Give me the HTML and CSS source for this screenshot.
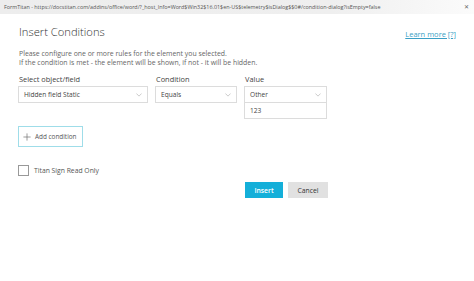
FILE: index.html
```html
<!DOCTYPE html>
<html lang="en">
<head>
  <meta charset="UTF-8">
  <title>FormTitan - Insert Conditions</title>
  <link rel="stylesheet" href="styles.css">
</head>
<body>
  <div class="titlebar">
    <span class="titlebar-text">FormTitan - https://docstitan.com/addins/office/word/?_host_Info=Word$Win32$16.01$en-US$telemetry$isDialog$$0#/condition-dialog?isEmpty=false</span>
    <span class="titlebar-close">&#x2715;</span>
  </div>

  <div class="dialog">
    <div class="dialog-header">
      <h1>Insert Conditions</h1>
      <a href="#" class="learn-more">Learn more [?]</a>
    </div>
    <p class="intro">
      Please configure one or more rules for the element you selected.<br>
      If the condition is met - the element will be shown, if not - it will be hidden.
    </p>

    <div class="rule">
      <div class="field">
        <label>Select object/field</label>
        <div class="select">
          <span>Hidden field Static</span>
          <svg class="chevron" viewBox="0 0 8 5"><path d="M0.5 0.5 L4 4 L7.5 0.5" fill="none" stroke="#aaa" stroke-width="0.8"/></svg>
        </div>
      </div>
      <div class="field">
        <label>Condition</label>
        <div class="select">
          <span>Equals</span>
          <svg class="chevron" viewBox="0 0 8 5"><path d="M0.5 0.5 L4 4 L7.5 0.5" fill="none" stroke="#aaa" stroke-width="0.8"/></svg>
        </div>
      </div>
      <div class="field">
        <label>Value</label>
        <div class="select">
          <span>Other</span>
          <svg class="chevron" viewBox="0 0 8 5"><path d="M0.5 0.5 L4 4 L7.5 0.5" fill="none" stroke="#aaa" stroke-width="0.8"/></svg>
        </div>
        <div class="text-input">123</div>
      </div>
    </div>

    <button class="add-btn">
      <svg viewBox="0 0 10 10"><path d="M5 0.5 V9.5 M0.5 5 H9.5" stroke="#777" stroke-width="0.9"/></svg>
      Add condition
    </button>

    <label class="check">
      <span class="box"></span>
      Titan Sign Read Only
    </label>

    <div class="actions">
      <button class="btn btn-primary">Insert</button>
      <button class="btn btn-default">Cancel</button>
    </div>
  </div>
</body>
</html>
```

FILE: styles.css
```css
body {
  margin: 0;
  font-family: 'Open Sans', 'Noto Sans', Arial, sans-serif;
  background: #fff;
  color: #444;
}
.titlebar {
  height: 14px;
  display: flex;
  align-items: center;
  justify-content: space-between;
  padding: 0 5px 0 4px;
  background: linear-gradient(90deg, #ededed 0%, #efefef 70%, #fbfbfb 100%);
}
.titlebar-text {
  font-size: 5.4px;
  color: #555;
  white-space: nowrap;
}
.titlebar-close {
  font-size: 6px;
  color: #666;
}
.dialog {
  padding: 0 18px 0 19px;
}
.dialog-header {
  display: flex;
  justify-content: space-between;
  align-items: center;
  margin-top: 10px;
}
.dialog-header h1 {
  margin: 0;
  font-size: 11.2px;
  font-weight: 300;
  color: #333;
  line-height: 16px;
}
.learn-more {
  font-size: 7.5px;
  color: #3a9fc5;
  text-decoration: underline;
  margin-top: 3px;
}
.intro {
  margin: 9px 0 0;
  font-size: 6.9px;
  line-height: 9px;
  color: #666;
}
.rule {
  display: grid;
  grid-template-columns: 130px 82px 83px;
  column-gap: 7px;
  margin-top: 8px;
  margin-left: -1px;
}
.field label {
  display: block;
  font-size: 7.4px;
  color: #444;
  line-height: 9px;
  margin-bottom: 2px;
  padding-left: 1px;
}
.select,
.text-input {
  height: 15px;
  border: 1px solid #dcdcdc;
  display: flex;
  align-items: center;
  justify-content: space-between;
  padding: 0 5px;
  font-size: 6.6px;
  color: #444;
}
.text-input {
  border-top: none;
}
.chevron {
  width: 6px;
  height: 4px;
}
.add-btn {
  display: flex;
  align-items: center;
  gap: 4px;
  margin-top: 7px;
  margin-left: -1px;
  height: 21px;
  padding: 0 5px 0 4px;
  background: #fff;
  border: 1px solid #9fdde9;
  font-family: inherit;
  font-size: 6.4px;
  color: #555;
}
.add-btn svg {
  width: 8px;
  height: 8px;
}
.check {
  display: flex;
  align-items: center;
  gap: 5px;
  margin-top: 18px;
  margin-left: -1px;
  font-size: 6.8px;
  color: #555;
}
.check .box {
  width: 9px;
  height: 9px;
  border: 1px solid #999;
}
.actions {
  display: flex;
  gap: 5px;
  margin: 6px 0 0 226px;
}
.btn {
  height: 16px;
  border: none;
  font-family: inherit;
  font-size: 6.8px;
  padding: 0;
}
.btn-primary {
  width: 38px;
  background: #14afd9;
  color: #fff;
  font-weight: 600;
}
.btn-default {
  width: 40px;
  background: #e1e1e1;
  color: #333;
}
```
